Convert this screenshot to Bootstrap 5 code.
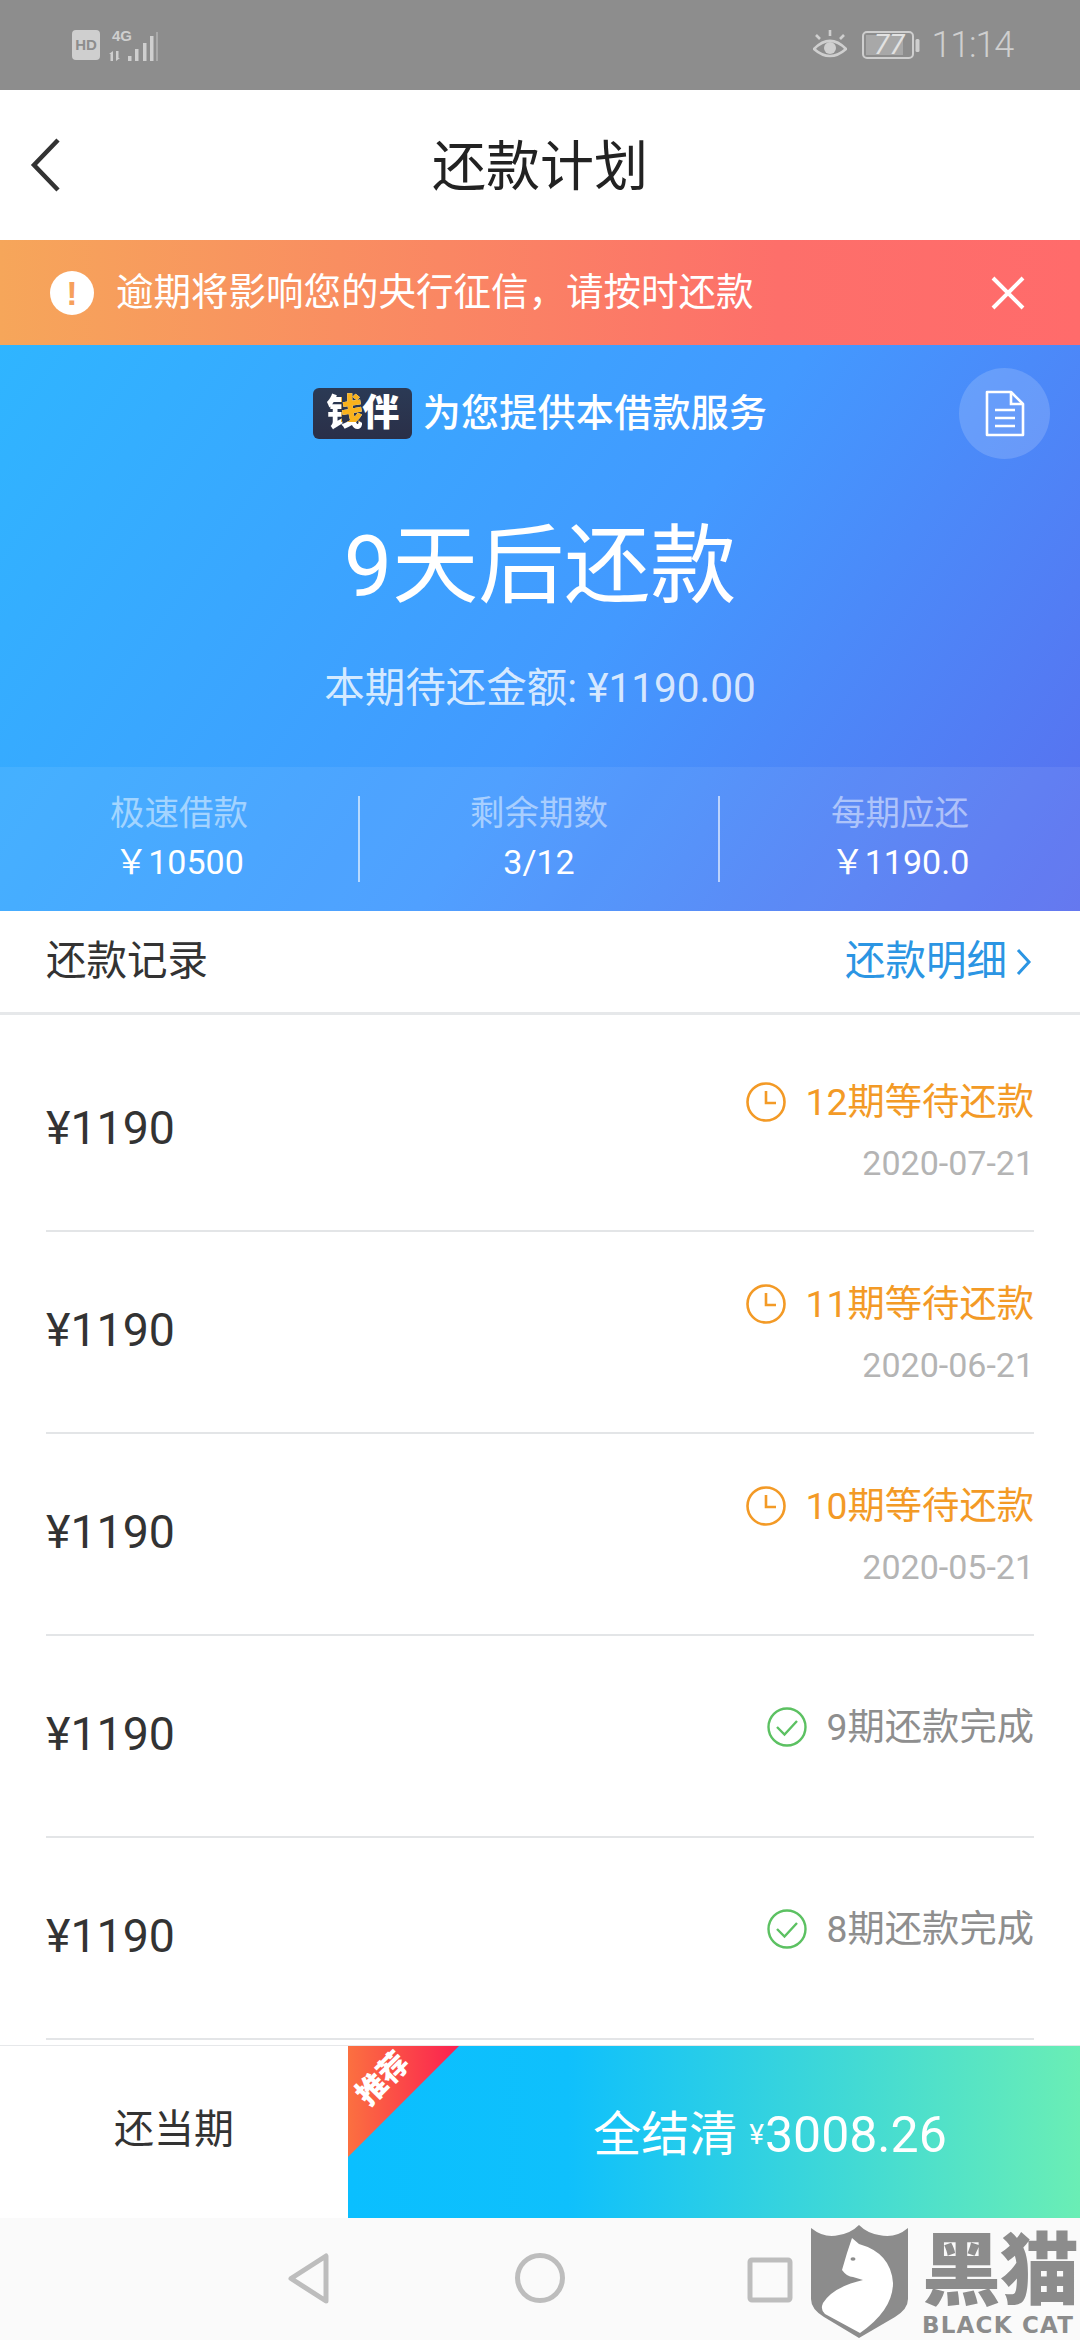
<!DOCTYPE html>
<html lang="zh-CN">
<head>
    <meta charset="UTF-8">
    <meta name="viewport" content="width=device-width, initial-scale=1.0">
    <title>还款计划</title>
    <link href="https://cdn.jsdelivr.net/npm/bootstrap@5.3.0/dist/css/bootstrap.min.css" rel="stylesheet">
    <style>
        body {
            width: 1080px;
            height: 2340px;
            overflow: hidden;
            font-family: Roboto, "Noto Sans CJK SC", sans-serif;
            color: #333;
            background: #fff;
        }
        .status-strip { height: 90px; background: #8d8d8d; color: #cfcfcf; padding: 0 67px 0 72px; }
        .status-time { font-size: 36px; font-weight: 300; line-height: 1; margin-left: 12px; letter-spacing: -1.2px; }
        .hd-chip { width: 28px; height: 30px; background: #cfcfcf; color: #8d8d8d; border-radius: 4px; font: 700 15px/30px "Liberation Sans", sans-serif; text-align: center; }
        .net-tag { font: 700 15px/1 "Liberation Sans", sans-serif; position: absolute; left: 112px; top: 28px; }
        .batt-num { position: absolute; left: 874px; top: 31px; font-size: 28px; line-height: 1; font-style: italic; color: #e2e2e2; }

        .title-bar { height: 150px; padding-top: 6px; }
        .title-text { font-size: 54px; line-height: 1; color: #222; }
        .back-btn { position: absolute; left: 30px; top: 50%; transform: translateY(-50%); }

        .warn-bar { height: 105px; background: linear-gradient(90deg, #f6a65a, #fd6f6a 72%, #ff6b6b); color: #fff; font-size: 37.500px; padding: 0 55px 0 50px; }
        .warn-dot { width: 44px; height: 44px; border-radius: 50%; background: #fff; color: #f6a05c; font: 700 34px/44px "Liberation Sans", sans-serif; text-align: center; margin-right: 22px; }

        .hero-box { height: 566px; background: linear-gradient(125deg, #2fb5ff 0%, #4399ff 55%, #5a6eee 100%); color: #fff; }
        .hero-main { height: 422px; padding-top: 43px; }
        .brand-line { font-size: 38px; line-height: 51px; font-weight: 500; letter-spacing: .3px; }
        .brand-logo { width: 99px; height: 51px; border-radius: 6px; background: linear-gradient(#2b3a55, #2a2f48); font-size: 37px; font-weight: 900; line-height: 51px; text-align: center; margin-right: 11px; letter-spacing: -1px; }
        .brand-money { background: linear-gradient(#f9b21c, #f9b21c) no-repeat right top / 58% 70%, #fff; -webkit-background-clip: text; background-clip: text; color: transparent; }
        .doc-btn { position: absolute; right: 30px; top: 23px; width: 91px; height: 91px; border-radius: 50%; background: rgba(255, 255, 255, .16); }
        .due-big { font-size: 86px; line-height: 1; margin-top: 85px; }
        .due-sub { font-size: 40.500px; line-height: 1; margin-top: 58px; color: rgba(255, 255, 255, .8); }
        .stat-band { height: 144px; background: rgba(255, 255, 255, .07); }
        .stat-cell { height: 86px; padding-bottom: 3px; }
        .stat-first { width: 358px; }
        .stat-mid { width: 360px; }
        .stat-last { width: 362px; }
        .stat-cell + .stat-cell { border-left: 2px solid rgba(255, 255, 255, .6); }
        .stat-label { font-size: 34.500px; line-height: 1; color: rgba(255, 255, 255, .5); margin-bottom: 15px; }
        .stat-value { font-size: 34px; line-height: 1; }

        .record-head { height: 104px; padding: 0 47px 0 46px; border-bottom: 3px solid #e6e8ea; font-size: 40.500px; }
        .record-link { color: #2b95e3; }

        .record-list { flex: 1 1 0; min-height: 0; overflow: hidden; padding: 15px 46px 0; }
        .record-row { height: 202px; border-bottom: 2px solid #e3e5e7; }
        .row-amount { font-size: 46.500px; line-height: 1; margin-bottom: 3px; }
        .row-state { font-size: 37.300px; line-height: 44px; }
        .row-wait { color: #f39a26; }
        .row-done { color: #8e8e8e; margin-bottom: 18px; }
        .row-date { font-size: 34px; line-height: 1; color: #b4b4b4; margin-top: 22px; }
        .state-ico { width: 40px; height: 40px; margin-right: 20px; }

        .pay-bar { height: 173px; border-top: 1px solid #e6e8ea; }
        .pay-one { width: 348px; font-size: 40px; padding-bottom: 4px; }
        .pay-all { flex: 1 1 0; background: linear-gradient(90deg, #0abfff 0%, #0fc0fc 30%, #6aeeb5 100%); color: #fff; font-size: 48px; padding-left: 112px; padding-top: 6px; }
        .pay-yen { font-size: 28px; margin: 0 1px 0 12px; }
        .pay-num { font-size: 50px; }
        .tag-corner { position: absolute; left: 348px; top: 2046px; width: 111px; height: 111px; background: linear-gradient(90deg, #fb7040, #fb2050); clip-path: polygon(0 0, 100% 0, 0 100%); }
        .tag-text { position: absolute; left: -5px; top: 18px; width: 80px; font-size: 30px; line-height: 1; font-weight: 900; color: #fff; text-align: center; transform: rotate(-45deg); }

        .sys-nav { height: 122px; background: #fafafa; }
        .cat-mark { position: absolute; left: 811px; top: 2225px; color: #8c8c8c; }
        .cat-name { margin-left: 14px; padding-top: 8px; }
        .cat-zh { font-size: 79px; line-height: 78px; font-weight: 900; letter-spacing: -1px; white-space: nowrap; }
        .cat-en { font: 700 23px/20px "DejaVu Sans", sans-serif; white-space: nowrap; margin-top: 4px; letter-spacing: 1.2px; }
    </style>
</head>
<body class="d-flex flex-column position-relative">

<svg width="0" height="0" class="position-absolute">
    <symbol id="ico-clock" viewBox="0 0 40 40">
        <circle cx="20" cy="20" r="18.500" fill="none" stroke="currentColor" stroke-width="2.600"/>
        <path d="M20 9v12h10" fill="none" stroke="currentColor" stroke-width="2.600"/>
    </symbol>
    <symbol id="ico-check" viewBox="0 0 40 40">
        <circle cx="20" cy="20" r="18.500" fill="none" stroke="#5cc162" stroke-width="2.400"/>
        <path d="M10 20l7.500 7.500L30 14" fill="none" stroke="#5cc162" stroke-width="2.400"/>
    </symbol>
</svg>

<div class="status-strip d-flex align-items-center justify-content-between flex-shrink-0">
    <div class="d-flex align-items-center">
        <div class="hd-chip">HD</div>
        <svg width="50" height="32" viewBox="0 0 50 32" class="ms-2" style="margin-top:1px">
            <g fill="#cfcfcf">
                <path d="M5 21v10h-2.500v-7H1ZM8 31V21h2.500v7H12Z"/>
                <rect x="20" y="26" width="3.500" height="5"/><rect x="27" y="19" width="3.500" height="12"/>
                <rect x="35" y="13" width="3.500" height="18"/><rect x="42" y="6" width="3.500" height="25"/>
            </g>
            <rect x="48" y="2" width="2" height="29" fill="#a9a9a9"/>
        </svg>
    </div>
    <div class="d-flex align-items-center">
        <svg width="34" height="30" viewBox="0 0 34 30" style="margin-right:15px">
            <g fill="none" stroke="#cfcfcf" stroke-width="2.600">
                <path d="M1 19Q17 3 33 19Q17 33 1 19Z"/>
                <path d="M17 6V0M7 9L3 5M27 9l4-4"/>
            </g>
            <circle cx="17" cy="18" r="6" fill="#cfcfcf"/>
        </svg>
        <svg width="58" height="28" viewBox="0 0 58 28">
            <rect x="1" y="1" width="50" height="26" rx="4" fill="none" stroke="#cfcfcf" stroke-width="2"/>
            <rect x="4" y="4" width="37" height="20" fill="#a8a8a8"/>
            <rect x="53.500" y="8" width="4" height="13" rx="1.500" fill="#cfcfcf"/>
        </svg>
        <span class="status-time">11:14</span>
    </div>
    <span class="net-tag">4G</span>
    <span class="batt-num">77</span>
</div>

<div class="title-bar position-relative d-flex align-items-center justify-content-center flex-shrink-0 bg-white">
    <svg class="back-btn" width="30" height="54" viewBox="0 0 30 54">
        <path d="M28 2L4 27l24 25" fill="none" stroke="#333" stroke-width="4.500"/>
    </svg>
    <span class="title-text">还款计划</span>
</div>

<div class="warn-bar d-flex align-items-center flex-shrink-0">
    <div class="warn-dot flex-shrink-0">!</div>
    <span class="flex-grow-1">逾期将影响您的央行征信，请按时还款</span>
    <svg width="34" height="34" viewBox="0 0 34 34">
        <path d="M2 2l30 30M32 2L2 32" stroke="#fff" stroke-width="4"/>
    </svg>
</div>

<div class="hero-box flex-shrink-0 d-flex flex-column">
    <div class="hero-main position-relative d-flex flex-column align-items-center">
        <div class="brand-line d-flex align-items-center">
            <div class="brand-logo"><span class="brand-money">钱</span>伴</div>
            <span>为您提供本借款服务</span>
        </div>
        <div class="doc-btn d-flex align-items-center justify-content-center">
            <svg width="40" height="47" viewBox="0 0 40 47">
                <path d="M2 2H26L38 14V45H2Z" fill="none" stroke="#fff" stroke-width="2.600" stroke-linejoin="round"/>
                <path d="M26 2V14H38M10 20H30M10 28H30M10 36H30" fill="none" stroke="#fff" stroke-width="2.600"/>
            </svg>
        </div>
        <div class="due-big">9天后还款</div>
        <div class="due-sub">本期待还金额: ¥1190.00</div>
    </div>
    <div class="stat-band d-flex align-items-center">
        <div class="stat-cell stat-first d-flex flex-column align-items-center justify-content-center">
            <div class="stat-label">极速借款</div>
            <div class="stat-value">￥10500</div>
        </div>
        <div class="stat-cell stat-mid d-flex flex-column align-items-center justify-content-center">
            <div class="stat-label">剩余期数</div>
            <div class="stat-value">3/12</div>
        </div>
        <div class="stat-cell stat-last d-flex flex-column align-items-center justify-content-center">
            <div class="stat-label">每期应还</div>
            <div class="stat-value">￥1190.0</div>
        </div>
    </div>
</div>

<div class="record-head d-flex align-items-center justify-content-between flex-shrink-0">
    <span>还款记录</span>
    <span class="record-link d-flex align-items-center">还款明细
        <svg width="18" height="30" viewBox="0 0 18 30" class="ms-2"><path d="M3 3l11 12L3 27" fill="none" stroke="#2b95e3" stroke-width="3"/></svg>
    </span>
</div>

<div class="record-list d-flex flex-column">
    <div class="record-row d-flex align-items-center justify-content-between flex-shrink-0">
        <span class="row-amount">¥1190</span>
        <div class="text-end">
            <div class="row-state row-wait d-flex align-items-center justify-content-end"><svg class="state-ico"><use href="#ico-clock"/></svg>12期等待还款</div>
            <div class="row-date">2020-07-21</div>
        </div>
    </div>
    <div class="record-row d-flex align-items-center justify-content-between flex-shrink-0">
        <span class="row-amount">¥1190</span>
        <div class="text-end">
            <div class="row-state row-wait d-flex align-items-center justify-content-end"><svg class="state-ico"><use href="#ico-clock"/></svg>11期等待还款</div>
            <div class="row-date">2020-06-21</div>
        </div>
    </div>
    <div class="record-row d-flex align-items-center justify-content-between flex-shrink-0">
        <span class="row-amount">¥1190</span>
        <div class="text-end">
            <div class="row-state row-wait d-flex align-items-center justify-content-end"><svg class="state-ico"><use href="#ico-clock"/></svg>10期等待还款</div>
            <div class="row-date">2020-05-21</div>
        </div>
    </div>
    <div class="record-row d-flex align-items-center justify-content-between flex-shrink-0">
        <span class="row-amount">¥1190</span>
        <div class="row-state row-done d-flex align-items-center justify-content-end"><svg class="state-ico"><use href="#ico-check"/></svg>9期还款完成</div>
    </div>
    <div class="record-row d-flex align-items-center justify-content-between flex-shrink-0">
        <span class="row-amount">¥1190</span>
        <div class="row-state row-done d-flex align-items-center justify-content-end"><svg class="state-ico"><use href="#ico-check"/></svg>8期还款完成</div>
    </div>
</div>

<div class="pay-bar d-flex flex-shrink-0">
    <div class="pay-one d-flex align-items-center justify-content-center">还当期</div>
    <div class="pay-all d-flex align-items-center justify-content-center">全结清<span class="pay-yen">¥</span><span class="pay-num">3008.26</span></div>
</div>
<div class="tag-corner"><div class="tag-text">推荐</div></div>

<div class="sys-nav d-flex align-items-center flex-shrink-0 position-relative">
    <svg width="1080" height="122" viewBox="0 0 1080 122">
        <g fill="none" stroke="#bdbdbd" stroke-width="5" stroke-linejoin="round">
            <path d="M326 38V83L291 60.500Z"/>
            <circle cx="540" cy="60" r="22.500"/>
            <rect x="750" y="42" width="40" height="40" rx="2"/>
        </g>
    </svg>
</div>

<div class="cat-mark d-flex">
    <svg width="97" height="113" viewBox="0 0 97 113" class="flex-shrink-0">
        <path d="M0 3Q14 14 28 10Q40 8 48 0Q56 8 68 10Q84 14 97 3V74Q97 84 84 92L48 113L13 92Q0 84 0 74Z" fill="#8c8c8c"/>
        <path d="M41 13L48 19Q80 28 82 58Q82 85 49 108L14 89Q9 85 12 78Q22 62 52 55L42 52Q36 52 31 45L36 28Z" fill="#fff"/>
        <ellipse cx="42" cy="34" rx="2.500" ry="1.800" fill="#8c8c8c"/>
    </svg>
    <div class="cat-name">
        <div class="cat-zh">黑猫</div>
        <div class="cat-en">BLACK CAT</div>
    </div>
</div>

<script src="https://cdn.jsdelivr.net/npm/bootstrap@5.3.0/dist/js/bootstrap.bundle.min.js"></script>
</body>
</html>
